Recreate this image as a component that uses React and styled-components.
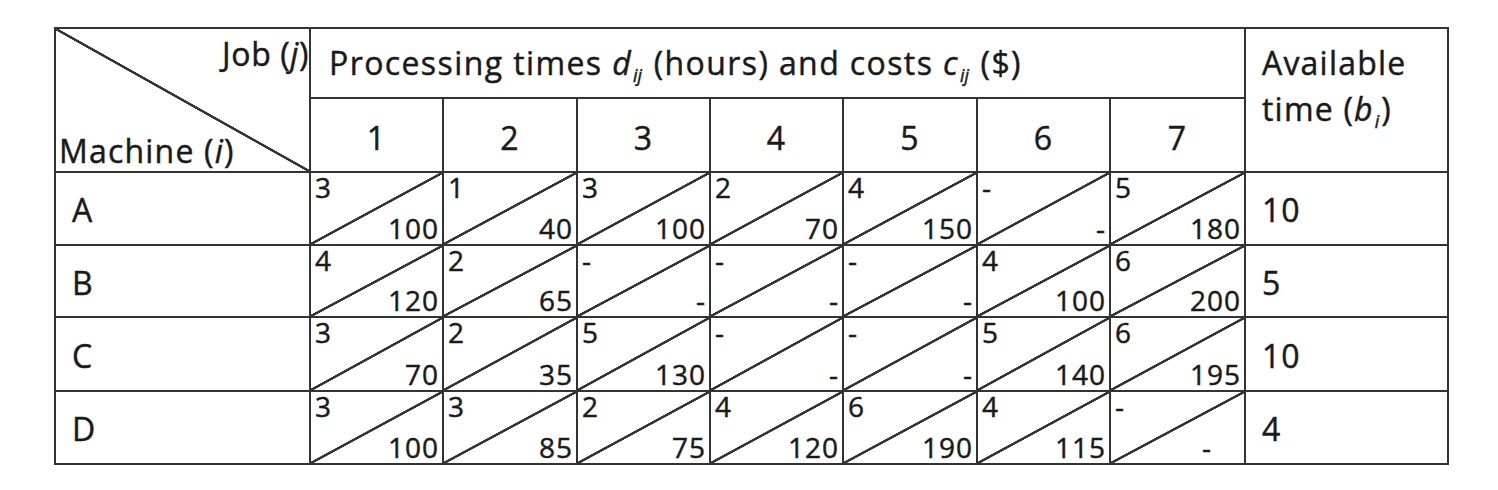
import React from "react";
import styled, { createGlobalStyle, css } from "styled-components";

const Global = createGlobalStyle`
  html, body { margin: 0; padding: 0; background: #ffffff; }
  body {
    font-family: "Open Sans", "Noto Sans", sans-serif;
    color: #1a1a1a;
    font-weight: 400;
    -webkit-text-stroke: 0.45px #1a1a1a;
  }
`;

const LINE = "#333333";

const diag = (dir) => css`
  background-image: linear-gradient(
    ${dir},
    transparent calc(50% - 1.5px),
    ${LINE} calc(50% - 1px),
    ${LINE} calc(50% + 1px),
    transparent calc(50% + 1.5px)
  );
`;

const Page = styled.div`
  padding: 27px 0 0 54px;
`;

const Grid = styled.div`
  display: grid;
  width: max-content;
  grid-template-columns: 255px 133px 134px 133px 133px 134px 133px 135px 203px;
  grid-template-rows: 70px 74px 73px 72px 74px 73px;
  border-top: 2px solid ${LINE};
  border-left: 2px solid ${LINE};
`;

const Cell = styled.div`
  box-sizing: border-box;
  border-right: 2px solid ${LINE};
  border-bottom: 2px solid ${LINE};
  font-size: 32px;
  letter-spacing: 1px;
  line-height: 38px;
`;

const Corner = styled(Cell)`
  grid-column: 1;
  grid-row: 1 / 3;
  display: flex;
  flex-direction: column;
  justify-content: space-between;
  padding: 6px 0 1px 3px;
  ${diag("to top right")}
`;

const JobLabel = styled.span`
  align-self: flex-end;
  letter-spacing: 0.6px;
`;

const MachineLabel = styled.span`
  align-self: flex-start;
  letter-spacing: 1.2px;
`;

const Title = styled(Cell)`
  grid-column: 2 / 9;
  grid-row: 1;
  display: flex;
  align-items: center;
  padding-left: 18px;
  letter-spacing: 1.4px;
`;

const Avail = styled(Cell)`
  grid-column: 9;
  grid-row: 1 / 3;
  padding: 11px 0 0 16px;
  line-height: 46px;
  letter-spacing: 1.2px;
`;

const JobNum = styled(Cell)`
  display: flex;
  align-items: center;
  justify-content: center;
  padding-top: 6px;
`;

const RowLabel = styled(Cell)`
  display: flex;
  align-items: center;
  padding: 3px 0 0 ${(p) => p.$pad}px;
`;

const Pair = styled(Cell)`
  display: flex;
  flex-direction: column;
  justify-content: space-between;
  padding: 1px 4px 2px 4px;
  font-size: 28px;
  line-height: 27px;
  letter-spacing: 1px;
  ${diag("to top left")}
`;

const Time = styled.span`
  align-self: flex-start;
`;

const Cost = styled.span`
  align-self: flex-end;
  margin-right: ${(p) => (p.$shift ? p.$shift : -1)}px;
`;

const Var = styled.i`
  font-style: italic;
`;

const Sub = styled.sub`
  font-size: 0.55em;
  font-style: italic;
  vertical-align: -0.4em;
  line-height: 0;
  letter-spacing: 0;
  margin: 0 2px 0 1px;
`;

const rows = [
  { m: "A", cells: [[3, 100], [1, 40], [3, 100], [2, 70], [4, 150], ["-", "-"], [5, 180]], b: 10 },
  { m: "B", cells: [[4, 120], [2, 65], ["-", "-"], ["-", "-"], ["-", "-"], [4, 100], [6, 200]], b: 5 },
  { m: "C", cells: [[3, 70], [2, 35], [5, 130], ["-", "-"], ["-", "-"], [5, 140], [6, 195]], b: 10 },
  { m: "D", cells: [[3, 100], [3, 85], [2, 75], [4, 120], [6, 190], [4, 115], ["-", "-", 28]], b: 4 },
];

export default function App() {
  return (
    <>
      <Global />
      <Page>
        <Grid>
          <Corner>
            <JobLabel>
              Job (<Var>j</Var>)
            </JobLabel>
            <MachineLabel>
              Machine (<Var>i</Var>)
            </MachineLabel>
          </Corner>
          <Title>
            <span>
              Processing times <Var>d</Var>
              <Sub>ij</Sub> (hours) and costs <Var>c</Var>
              <Sub>ij</Sub> ($)
            </span>
          </Title>
          <Avail>
            Available
            <br />
            time (<Var>b</Var>
            <Sub>i</Sub>)
          </Avail>
          {[1, 2, 3, 4, 5, 6, 7].map((n) => (
            <JobNum key={n}>{n}</JobNum>
          ))}
          {rows.map((r) => (
            <React.Fragment key={r.m}>
              <RowLabel $pad={16}>{r.m}</RowLabel>
              {r.cells.map(([t, c, shift], i) => (
                <Pair key={i}>
                  <Time>{t}</Time>
                  <Cost $shift={shift}>{c}</Cost>
                </Pair>
              ))}
              <RowLabel $pad={16}>{r.b}</RowLabel>
            </React.Fragment>
          ))}
        </Grid>
      </Page>
    </>
  );
}
